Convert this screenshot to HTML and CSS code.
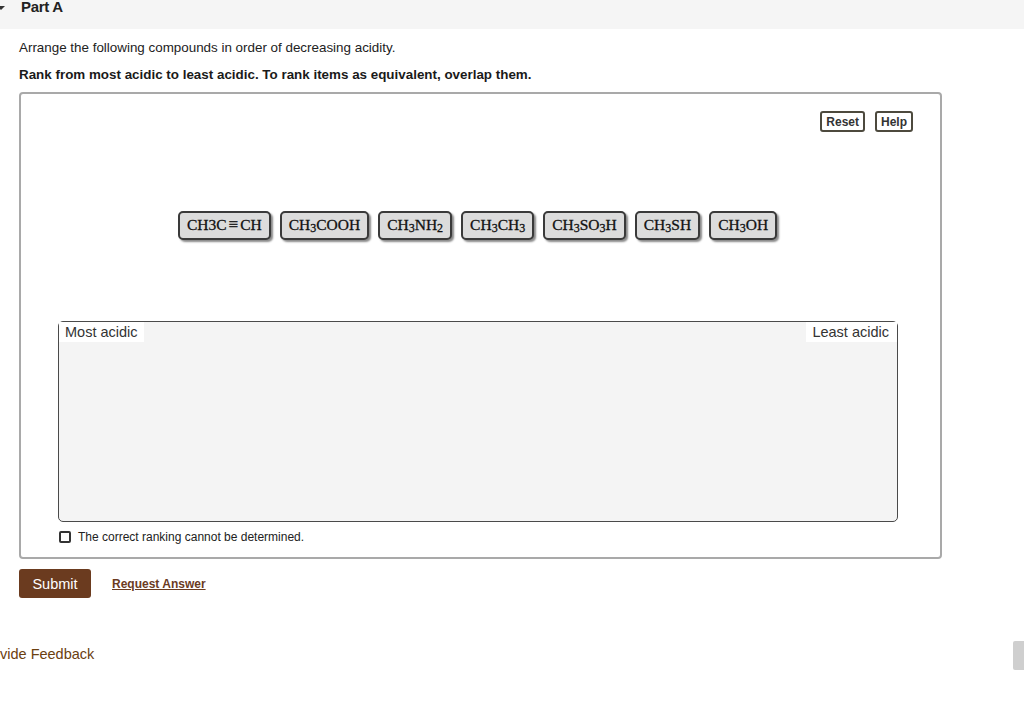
FILE: index.html
```html
<!DOCTYPE html>
<html lang="en">
<head>
<meta charset="utf-8">
<title>Part A</title>
<link rel="stylesheet" href="styles.css">
</head>
<body>
<div class="header">
  <span class="caret"></span>
  <span class="part-title">Part A</span>
</div>
<div class="content">
  <p class="prompt">Arrange the following compounds in order of decreasing acidity.</p>
  <p class="instr">Rank from most acidic to least acidic. To rank items as equivalent, overlap them.</p>
  <div class="widget">
    <div class="tools">
      <button class="tool">Reset</button>
      <button class="tool">Help</button>
    </div>
    <div class="chips">
      <div class="chip">CH3C<span class="triple">&#8801;</span>CH</div>
      <div class="chip">CH<sub>3</sub>COOH</div>
      <div class="chip">CH<sub>3</sub>NH<sub>2</sub></div>
      <div class="chip">CH<sub>3</sub>CH<sub>3</sub></div>
      <div class="chip">CH<sub>3</sub>SO<sub>3</sub>H</div>
      <div class="chip">CH<sub>3</sub>SH</div>
      <div class="chip">CH<sub>3</sub>OH</div>
    </div>
    <div class="rank">
      <span class="rank-label">Most acidic</span>
      <span class="rank-label">Least acidic</span>
    </div>
    <label class="check-row"><span class="checkbox"></span>The correct ranking cannot be determined.</label>
  </div>
  <div class="actions">
    <button class="submit">Submit</button>
    <a class="request" href="#">Request Answer</a>
  </div>
</div>
<div class="feedback">vide Feedback</div>
<div class="side-tab"></div>
</body>
</html>
```
FILE: styles.css
```css
* { box-sizing: border-box; }
html, body { margin: 0; padding: 0; background: #fff; }
body {
  font-family: "Liberation Sans", Arial, sans-serif;
  color: #222;
  width: 1024px;
  height: 728px;
  position: relative;
  overflow: hidden;
}
.header {
  height: 29px;
  background: #f5f5f5;
  display: flex;
  align-items: flex-start;
}
.caret {
  width: 0; height: 0;
  margin-left: -3px;
  margin-top: 6px;
  border-left: 4px solid transparent;
  border-right: 4px solid transparent;
  border-top: 4px solid #333;
}
.part-title {
  margin-left: 16px;
  font-weight: bold;
  font-size: 15px;
  line-height: 14px;
  color: #222;
  letter-spacing: -0.3px;
}
.content { padding-left: 19px; }
.prompt {
  margin: 12px 0 0;
  font-size: 13.4px;
  line-height: 14px;
  color: #222;
}
.instr {
  margin: 13px 0 0;
  font-size: 13.4px;
  line-height: 14px;
  font-weight: bold;
  color: #1a1a1a;
}
.widget {
  margin-top: 10px;
  width: 923px;
  height: 467px;
  border: 2px solid #a9a9a9;
  border-radius: 4px;
  display: flex;
  flex-direction: column;
}
.tools {
  display: flex;
  justify-content: flex-end;
  gap: 10px;
  margin-top: 17px;
  padding-right: 27px;
}
.tool {
  height: 21px;
  padding: 0 4px;
  border: 2px solid #4d4a3e;
  border-radius: 3px;
  background: #fff;
  font-family: "Liberation Sans", Arial, sans-serif;
  font-weight: bold;
  font-size: 12px;
  color: #333;
  line-height: 16px;
}
.chips {
  display: flex;
  justify-content: center;
  gap: 9px;
  margin-top: 79px;
  padding-right: 6px;
}
.chip {
  height: 29px;
  padding: 0 7px;
  border: 2px solid #3a3a3a;
  border-radius: 5px;
  background: #dcdcdc;
  box-shadow: 2px 2px 2px #8a8a8a;
  font-family: "Liberation Serif", "Times New Roman", serif;
  font-size: 15.5px;
  line-height: 24px;
  color: #111;
  -webkit-text-stroke: 0.3px #111;
  white-space: nowrap;
}
.chip sub {
  font-size: 12px;
  vertical-align: -2px;
  line-height: 0;
}
.triple {
  display: inline-block;
  font-size: 17px;
  margin: 0 2px;
}
.rank {
  margin: 81px 0 0 37px;
  width: 840px;
  height: 201px;
  background: #f4f4f4;
  border: 1.5px solid #4a4a4a;
  border-radius: 5px;
  display: flex;
  justify-content: space-between;
  align-items: flex-start;
}
.rank-label {
  background: #fff;
  font-size: 14.5px;
  line-height: 20px;
  padding: 0 6px;
  color: #333;
}
.rank-label + .rank-label { padding-right: 8px; }
.check-row {
  display: flex;
  align-items: center;
  margin: 8px 0 0 38px;
  font-size: 12px;
  color: #222;
}
.checkbox {
  width: 12px;
  height: 12px;
  border: 2px solid #333;
  border-radius: 2px;
  margin-right: 7px;
  background: #fff;
}
.actions {
  display: flex;
  align-items: center;
  margin-top: 10px;
}
.submit {
  width: 72px;
  height: 29px;
  background: #6b3b1f;
  border: none;
  border-radius: 3px;
  color: #fff;
  font-family: "Liberation Sans", Arial, sans-serif;
  font-size: 14.5px;
  padding: 0;
}
.request {
  margin-left: 21px;
  font-size: 12px;
  font-weight: bold;
  color: #6b3b1f;
  text-decoration: underline;
}
.feedback {
  margin-top: 48px;
  font-size: 14.5px;
  line-height: 16px;
  color: #6b4010;
}
.side-tab {
  position: absolute;
  right: 0;
  top: 641px;
  width: 11px;
  height: 29px;
  background: #cfcfcf;
  border-radius: 2px 0 0 2px;
}
```
